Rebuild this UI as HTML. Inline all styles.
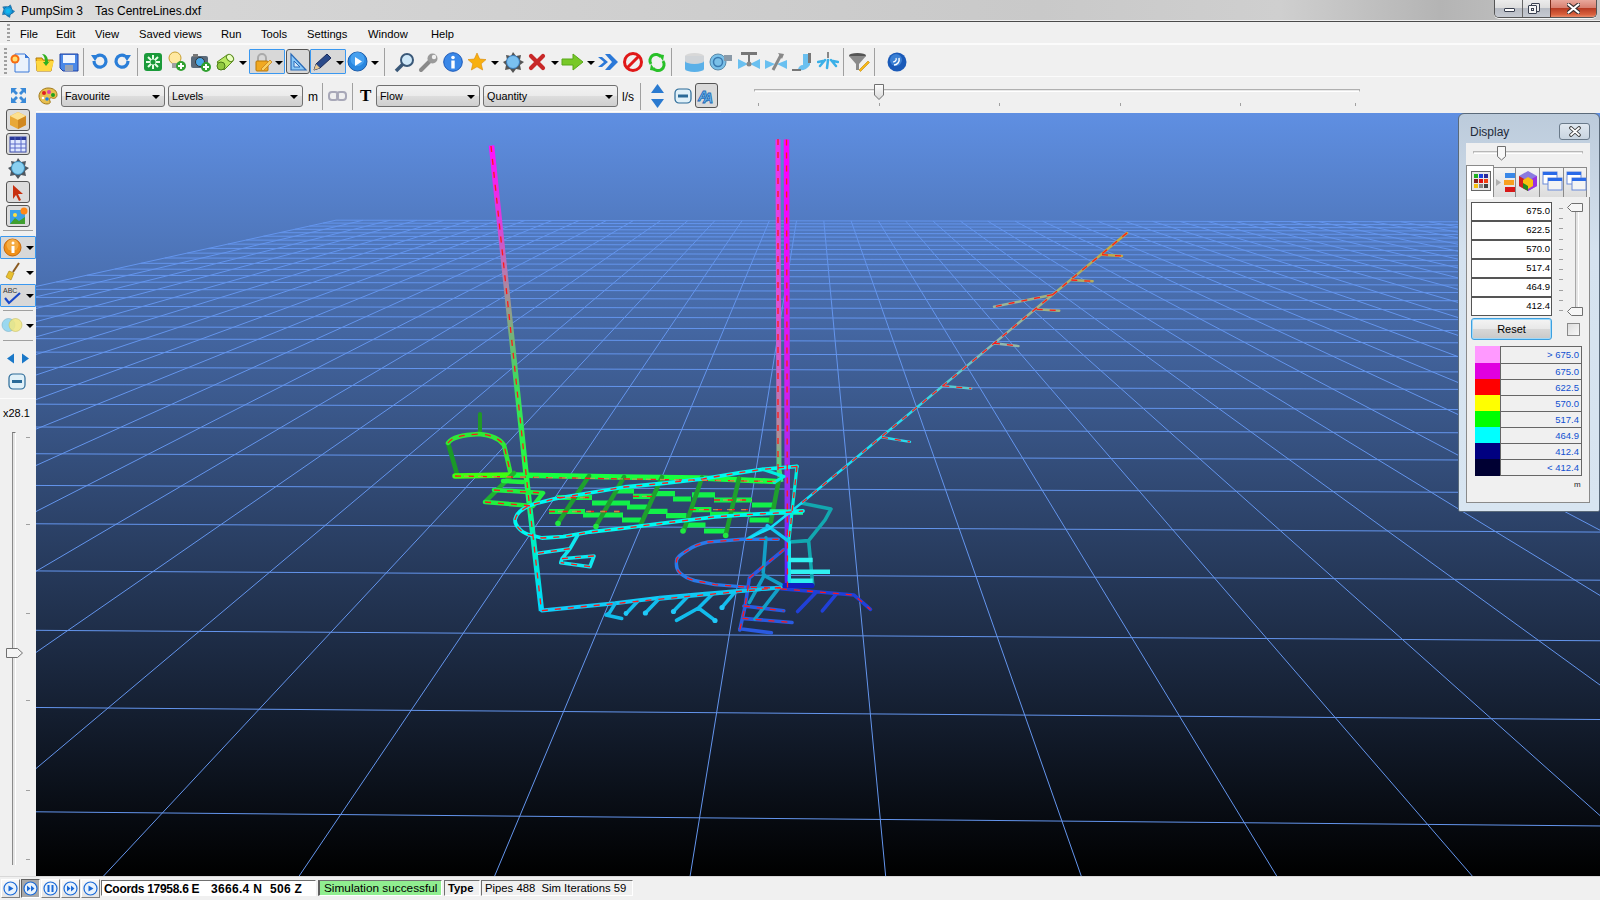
<!DOCTYPE html>
<html><head><meta charset="utf-8"><title>PumpSim 3</title>
<style>
*{box-sizing:border-box;margin:0;padding:0}
html,body{width:1600px;height:900px;overflow:hidden;background:#f0f0f0;font-family:"Liberation Sans",sans-serif;font-size:12px;color:#000;position:relative}
.a{position:absolute}
#view{position:absolute;left:0;top:0;z-index:1}
#title{position:absolute;left:0;top:0;width:1600px;height:22px;background:linear-gradient(90deg,#e2e2e2 0%,#d6d6d6 10%,#cfcfcf 40%,#c9c9c9 65%,#cfcfcf 80%,#b4b4b4 90%,#c8c8c8 100%);border-bottom:1px solid #4a4a4a;z-index:2}
#title:after{content:"";position:absolute;left:0;right:0;bottom:0;height:1px;background:#eee}
#title .t{position:absolute;top:4px;font-size:12px;color:#000}
#menu{position:absolute;left:0;top:22px;width:1600px;height:23px;background:#f0f0f0;z-index:2}
#menu span{position:absolute;top:6px;font-size:11.2px}
.grip{position:absolute;width:3px;background:repeating-linear-gradient(180deg,#a0a0a0 0 2px,transparent 2px 4px)}
.tb{position:absolute;left:0;width:1600px;background:#f0f0f0;z-index:2}
.sep{position:absolute;width:1px;background:#a0a0a0}
.ic{position:absolute}
.combo{position:absolute;height:22px;border:1px solid #707070;border-radius:3px;background:linear-gradient(#f2f2f2,#ebebeb 50%,#dddddd 50%,#cfcfcf);font-size:10.8px;padding:4px 0 0 3px}
.combo:after{content:"";position:absolute;right:4px;top:9px;border-left:4px solid transparent;border-right:4px solid transparent;border-top:4px solid #000}
.pressed{position:absolute;border:1px solid #3a98f0;background:#d8d8d8;border-radius:1px}
.pressed2{position:absolute;border:1px solid #555;background:#d8d8d8;border-radius:3px}
.dd{position:absolute;width:0;height:0;border-left:4px solid transparent;border-right:4px solid transparent;border-top:4px solid #000}
#left{position:absolute;left:0;top:111px;width:36px;height:765px;background:#f0f0f0;z-index:2}
#status{position:absolute;left:0;top:876px;width:1600px;height:24px;background:#f0f0f0;z-index:2}
.sb{position:absolute;top:4px;height:16px;border:1px solid #fff;border-top-color:#707070;border-left-color:#707070;font-size:11.3px;padding:1px 0 0 3px;white-space:nowrap;line-height:13px}
#panel{position:absolute;left:1458px;top:113px;width:142px;height:399px;border:1px solid #5a6a7a;border-radius:6px 6px 2px 2px;background:linear-gradient(#bccbdb,#d5e2ef 35%,#d8e5f1);z-index:3}
.fld{position:absolute;left:12px;width:81px;height:19px;border:1px solid #555;background:#fff;text-align:right;font-size:9.5px;padding:2px 1px 0 0}
.lg{position:absolute;left:16px;width:107px;height:17px}
.lg b{position:absolute;left:0;top:0;width:25px;height:17px}
.lg i{position:absolute;left:25px;top:0;width:82px;height:17px;border:1px solid #666;background:#f0f0f0;font-style:normal;text-align:right;color:#1050d0;font-size:9.5px;padding:2px 2px 0 0}
</style></head><body>
<div id="title">
<svg class="a" style="left:1px;top:4px" width="14" height="14" viewBox="0 0 16 16"><path d="M8.0 3.5L10.6 0.9Q12.7 4.0 12.1 6.1zM12.3 6.6L15.6 8.3Q13.3 11.3 11.1 11.3zM10.6 11.6L10.1 15.3Q6.5 14.0 5.8 11.9zM5.4 11.6L1.7 12.2Q1.8 8.4 3.6 7.1zM3.7 6.6L2.0 3.3Q5.7 2.3 7.5 3.5z" fill="#1a90d0" stroke="#0a4a80" stroke-width=".5"/><circle cx="8" cy="8" r="5" fill="#18a0e0" stroke="#0a5a90" stroke-width=".6"/><circle cx="8" cy="8" r="2.5" fill="#10b8f0"/></svg>
<span class="t" style="left:21px">PumpSim 3</span>
<span class="t" style="left:95px">Tas CentreLines.dxf</span>
<div class="a" style="left:1494px;top:0;width:103px;height:18px;border:1px solid #555;border-top:none;border-radius:0 0 5px 5px;overflow:hidden;box-shadow:0 1px 0 #f4f4f4">
 <div class="a" style="left:0;top:0;width:28px;height:17px;background:linear-gradient(#ececec,#dedede 45%,#b8bcc4 50%,#c6cad2);border-right:1px solid #666"></div>
 <div class="a" style="left:28px;top:0;width:27px;height:17px;background:linear-gradient(#ececec,#dedede 45%,#b8bcc4 50%,#c6cad2)"></div>
 <div class="a" style="left:55px;top:0;width:48px;height:17px;background:linear-gradient(#e8a89c,#d88070 45%,#b83c24 50%,#d8603c 85%,#e88a6a);border-left:1px solid #7a2a1a"></div>
 <div class="a" style="left:9px;top:8px;width:11px;height:4px;background:#fff;border:1px solid #3a4050;border-radius:1px"></div>
 <div class="a" style="left:36px;top:3px;width:9px;height:9px;border:1px solid #3a4050;background:#eee;border-radius:1px"></div>
 <div class="a" style="left:33px;top:5px;width:9px;height:9px;border:1px solid #3a4050;background:#f4f4f4;border-radius:1px"></div>
 <div class="a" style="left:36px;top:8px;width:3px;height:3px;border:1px solid #3a4050"></div>
 <svg class="a" style="left:72px;top:3px" width="13" height="11" viewBox="0 0 13 11"><path d="M1.5 1.5L11.5 9.5M11.5 1.5L1.5 9.5" stroke="#3a3030" stroke-width="4.2" stroke-linecap="round"/><path d="M1.5 1.5L11.5 9.5M11.5 1.5L1.5 9.5" stroke="#fff" stroke-width="2.2" stroke-linecap="round"/></svg>
</div>
</div>
<div id="menu">
<div class="grip" style="left:7px;top:2px;height:17px"></div>
<span style="left:20px">File</span><span style="left:56px">Edit</span><span style="left:95px">View</span><span style="left:139px">Saved views</span><span style="left:221px">Run</span><span style="left:261px">Tools</span><span style="left:307px">Settings</span><span style="left:368px">Window</span><span style="left:431px">Help</span>
<div class="a" style="left:0;top:21px;width:1600px;height:2px;background:#fbfbfb"></div>
</div>
<div class="tb" style="top:45px;height:32px">
<div class="grip" style="left:4px;top:3px;height:27px"></div>
<!-- new -->
<svg class="ic" style="left:10px;top:52px;top:7px" width="21" height="21" viewBox="0 0 21 21"><path d="M5 2h10l4 4v14H5z" fill="#eaf2fc" stroke="#3a78d8"/><path d="M15 2v4h4" fill="#3a78d8"/><circle cx="5" cy="7" r="4.5" fill="#f86c10"/><circle cx="5" cy="7" r="2.5" fill="#ffe070"/></svg>
<svg class="ic" style="left:35px;top:7px" width="21" height="21" viewBox="0 0 21 21"><path d="M1 6h6l1 2h10l-2 11H2z" fill="#f8c020" stroke="#b07808"/><path d="M1 9h18l-3 10H2z" fill="#ffd840"/><path d="M7 2c4 0 6 3 6 8l2-1-4 5-3-4 2 0c0-4-1-6-3-8z" fill="#30b020"/></svg>
<svg class="ic" style="left:59px;top:7px" width="21" height="21" viewBox="0 0 21 21"><path d="M1 2h18v17H4L1 16z" fill="#4a88e8" stroke="#2040a0"/><rect x="4" y="3" width="12" height="8" fill="#f0f6ff"/><rect x="6" y="13" width="8" height="6" fill="#9aa4b4"/></svg>
<div class="sep" style="left:83px;top:3px;height:28px"></div>
<svg class="ic" style="left:89px;top:7px" width="20" height="20" viewBox="0 0 20 20"><path d="M5 9a6 6 0 1 0 3-5" stroke="#2a7ed8" stroke-width="3.2" fill="none"/><path d="M2 3h8l-4 6z" fill="#2a7ed8"/></svg>
<svg class="ic" style="left:113px;top:7px" width="20" height="20" viewBox="0 0 20 20"><path d="M15 9a6 6 0 1 1-3-5" stroke="#2a7ed8" stroke-width="3.2" fill="none"/><path d="M18 3h-8l4 6z" fill="#2a7ed8"/></svg>
<div class="sep" style="left:137px;top:3px;height:28px"></div>
<svg class="ic" style="left:143px;top:7px" width="20" height="20" viewBox="0 0 20 20"><rect x="1" y="1" width="18" height="18" rx="3" fill="#1a9a3a"/><path d="M10 3v14M3 10h14M5 5l10 10M15 5L5 15" stroke="#e8ffe8" stroke-width="2"/><circle cx="10" cy="10" r="2.5" fill="#1a9a3a"/></svg>
<svg class="ic" style="left:167px;top:6px" width="20" height="21" viewBox="0 0 20 21"><circle cx="8" cy="7" r="6" fill="#ffe8a0" stroke="#c8a030"/><rect x="5" y="12" width="6" height="5" fill="#a0a0a0"/><circle cx="14" cy="15" r="5" fill="#30a030"/><path d="M14 12v6M11 15h6" stroke="#fff" stroke-width="2"/></svg>
<svg class="ic" style="left:190px;top:7px" width="22" height="20" viewBox="0 0 22 20"><rect x="1" y="4" width="17" height="12" rx="2" fill="#5a6a7a"/><circle cx="10" cy="10" r="4.5" fill="#4aa8e8" stroke="#333"/><rect x="3" y="2" width="5" height="3" fill="#777"/><circle cx="16" cy="15" r="5" fill="#30a030"/><path d="M16 12v6M13 15h6" stroke="#fff" stroke-width="2"/></svg>
<svg class="ic" style="left:214px;top:8px" width="22" height="19" viewBox="0 0 22 19"><path d="M3 9l10-7 6 6-9 9z" fill="#b8e860" stroke="#5a8a20"/><ellipse cx="16" cy="5" rx="4" ry="3" transform="rotate(45 16 5)" fill="#e8ffc0" stroke="#5a8a20"/><circle cx="7" cy="13" r="4" fill="#90c840" stroke="#4a7a18"/></svg>
<div class="dd" style="left:239px;top:16px"></div>
<div class="pressed" style="left:249px;top:4px;width:36px;height:25px"></div>
<svg class="ic" style="left:253px;top:7px" width="20" height="20" viewBox="0 0 20 20"><path d="M5 9V6a4 4 0 0 1 8 0v3" stroke="#aaa" stroke-width="2" fill="none"/><rect x="3" y="9" width="12" height="10" rx="1" fill="#f0a820" stroke="#b87808"/><path d="M8 17l9-9 2 2-9 9z" fill="#f8d060" stroke="#c88020" stroke-width=".8"/></svg>
<div class="dd" style="left:275px;top:16px"></div>
<div class="pressed2" style="left:286px;top:4px;width:24px;height:25px"></div>
<svg class="ic" style="left:288px;top:7px" width="20" height="20" viewBox="0 0 20 20"><path d="M3 2v16h15z" fill="#8ac8f8" stroke="#2a6ab8" stroke-width="1.2"/><path d="M6 9v6h6z" fill="#d8e8f8" stroke="#2a6ab8"/></svg>
<div class="pressed" style="left:310px;top:4px;width:36px;height:25px"></div>
<svg class="ic" style="left:312px;top:7px" width="20" height="20" viewBox="0 0 20 20"><path d="M2 18l2-6 11-10 4 4L8 16z" fill="#2a4a8a" stroke="#1a2a5a"/><path d="M2 18l2-6 4 4z" fill="#e8c890"/></svg>
<div class="dd" style="left:336px;top:16px"></div>
<svg class="ic" style="left:347px;top:6px" width="21" height="21" viewBox="0 0 21 21"><circle cx="10.5" cy="10.5" r="9.5" fill="#2a88e0" stroke="#1a5aa8"/><circle cx="10.5" cy="8" r="7" fill="#5ab0f8" opacity=".6"/><path d="M8 6l7 4.5-7 4.5z" fill="#fff"/></svg>
<div class="dd" style="left:371px;top:16px"></div>
<div class="sep" style="left:384px;top:3px;height:28px"></div>
<svg class="ic" style="left:394px;top:7px" width="22" height="21" viewBox="0 0 22 21"><circle cx="13" cy="8" r="6" fill="#cfe8f8" stroke="#3a5878" stroke-width="2"/><path d="M9 12l-7 7" stroke="#3a5878" stroke-width="3.5"/></svg>
<svg class="ic" style="left:418px;top:7px" width="21" height="21" viewBox="0 0 21 21"><path d="M3 18l9-9" stroke="#8a8a8a" stroke-width="4" stroke-linecap="round"/><circle cx="14.5" cy="6.5" r="5" fill="#9a9a9a"/><circle cx="16" cy="5" r="2.2" fill="#f0f0f0"/></svg>
<svg class="ic" style="left:443px;top:7px" width="20" height="20" viewBox="0 0 20 20"><circle cx="10" cy="10" r="9.3" fill="#3a88e8" stroke="#1a58b8"/><circle cx="10" cy="5.5" r="1.8" fill="#fff"/><rect x="8.3" y="8.5" width="3.4" height="8" fill="#fff"/></svg>
<svg class="ic" style="left:467px;top:7px" width="20" height="20" viewBox="0 0 20 20"><path d="M10 1l2.7 6 6.3.6-4.8 4.2 1.5 6.2L10 14.8 4.3 18l1.5-6.2L1 7.6 7.3 7z" fill="#f8b010" stroke="#d88808" stroke-width=".6"/></svg>
<div class="dd" style="left:491px;top:16px"></div>
<svg class="ic" style="left:502px;top:6px" width="22" height="22" viewBox="0 0 22 22"><path d="M11 1l3 4 5-1-1 5 4 2-4 3 1 5-5-1-3 4-3-4-5 1 1-5-3-3 4-2-1-5 5 1z" fill="#555"/><circle cx="11" cy="11" r="6.5" fill="#7ac0f0" stroke="#3a7ab8"/></svg>
<svg class="ic" style="left:528px;top:8px" width="18" height="18" viewBox="0 0 18 18"><path d="M3 3l12 12M15 3L3 15" stroke="#c82828" stroke-width="4.2" stroke-linecap="round"/></svg>
<div class="dd" style="left:551px;top:16px"></div>
<svg class="ic" style="left:561px;top:7px" width="23" height="20" viewBox="0 0 23 20"><path d="M1 7h11V2l10 8-10 8v-5H1z" fill="#78c828" stroke="#58a818"/></svg>
<div class="dd" style="left:587px;top:16px"></div>
<svg class="ic" style="left:597px;top:7px" width="23" height="20" viewBox="0 0 23 20"><path d="M1 5h4l6 5-6 5H1l6-5z" fill="#2a78d8"/><path d="M8 2h5l8 8-8 8H8l7-8z" fill="#2a78d8"/></svg>
<svg class="ic" style="left:622px;top:6px" width="22" height="22" viewBox="0 0 22 22"><circle cx="11" cy="11" r="8.5" fill="none" stroke="#e01818" stroke-width="3"/><path d="M5 17L17 5" stroke="#e01818" stroke-width="3"/></svg>
<svg class="ic" style="left:647px;top:7px" width="20" height="21" viewBox="0 0 20 21"><path d="M4 12a6 6 0 0 1 10-7" stroke="#28c028" stroke-width="3" fill="none"/><path d="M16 9a6 6 0 0 1-10 7" stroke="#28c028" stroke-width="3" fill="none"/><path d="M11 2l6 1-1 6z" fill="#28c028"/><path d="M9 19l-6-1 1-6z" fill="#28c028"/></svg>
<div class="sep" style="left:671px;top:3px;height:28px"></div>
<svg class="ic" style="left:684px;top:7px" width="21" height="20" viewBox="0 0 21 20"><ellipse cx="10.5" cy="4" rx="9.5" ry="3" fill="#d8d8d8"/><path d="M1 4v13a9.5 3 0 0 0 19 0V4" fill="#5ab0e8"/><path d="M1 4v5a9.5 3 0 0 0 19 0V4" fill="#d0d4d8"/></svg>
<svg class="ic" style="left:709px;top:8px" width="24" height="18" viewBox="0 0 24 18"><circle cx="9" cy="9" r="8" fill="#7ac0e8" stroke="#5a8aa8"/><circle cx="9" cy="9" r="4.5" fill="none" stroke="#3a7ab0" stroke-width="1.5"/><rect x="15" y="2" width="8" height="6" fill="#8a9aa8"/></svg>
<svg class="ic" style="left:737px;top:6px" width="24" height="21" viewBox="0 0 24 21"><path d="M1 8l10 5-10 5zM23 8l-10 5 10 5z" fill="#6ac0f0"/><rect x="4" y="1" width="16" height="3" fill="#777"/><rect x="11" y="3" width="2" height="9" fill="#777"/><circle cx="12" cy="13" r="2.5" fill="#888"/></svg>
<svg class="ic" style="left:764px;top:6px" width="24" height="21" viewBox="0 0 24 21"><path d="M1 9l10 4-10 5zM23 9l-10 4 10 5z" fill="#6ac0f0"/><path d="M9 19l8-15" stroke="#888" stroke-width="3"/><path d="M14 2l6 1-2 5z" fill="#888"/></svg>
<svg class="ic" style="left:791px;top:7px" width="22" height="20" viewBox="0 0 22 20"><path d="M2 18h5a5 5 0 0 1 5-5V2h7v11a12 12 0 0 1-12 5z" fill="#6ac0f0"/><rect x="17" y="1" width="3" height="10" fill="#777"/><rect x="1" y="17" width="9" height="2" fill="#777"/></svg>
<svg class="ic" style="left:817px;top:6px" width="22" height="21" viewBox="0 0 22 21"><rect x="10" y="1" width="2" height="6" fill="#888"/><path d="M11 9l-1 8M8 9l-5 6M14 9l5 6M6 10l-5 1M16 10l5 1M11 9v0" stroke="#3ab0e8" stroke-width="2.5" stroke-linecap="round"/></svg>
<div class="sep" style="left:843px;top:3px;height:28px"></div>
<svg class="ic" style="left:848px;top:7px" width="22" height="20" viewBox="0 0 22 20"><ellipse cx="9.5" cy="3.5" rx="8.5" ry="2.5" fill="#555"/><path d="M1 4l7 8v6h3v-6l7-8" fill="#8a8a8a"/><path d="M11 18l9-9 1.5 1.5-9 9z" fill="#f8b818" stroke="#c08808" stroke-width=".6"/></svg>
<div class="sep" style="left:874px;top:3px;height:28px"></div>
<svg class="ic" style="left:886px;top:6px" width="22" height="22" viewBox="0 0 22 22"><circle cx="11" cy="11" r="9.5" fill="#1a5ab8"/><circle cx="10" cy="9" r="6" fill="#4a90e0" opacity=".7"/><path d="M8 14c3 0 6-3 5-7" stroke="#fff" stroke-width="1.5" fill="none"/><path d="M7 11c2 0 4-2 3-4" stroke="#fff" stroke-width="1.2" fill="none"/></svg>
<div class="a" style="left:0;top:31px;width:1600px;height:1px;background:#fbfbfb"></div>
</div>
<div class="tb" style="top:77px;height:34px">
<svg class="ic" style="left:10px;top:10px" width="17" height="17" viewBox="0 0 17 17"><path d="M1 1h6L5 3l3 3-2 2-3-3-2 2zM16 1v6l-2-2-3 3-2-2 3-3-2-2zM1 16v-6l2 2 3-3 2 2-3 3 2 2zM16 16h-6l2-2-3-3 2-2 3 3 2-2z" fill="#3a8ad8"/></svg>
<svg class="ic" style="left:38px;top:10px" width="20" height="18" viewBox="0 0 20 18"><path d="M10 1c6 0 9 3 9 7 0 3-3 4-5 3-2-1-3 1-2 3 1 2-1 3-3 3C4 17 1 13 1 9s4-8 9-8z" fill="#e8c050" stroke="#a07818"/><circle cx="6" cy="6" r="2" fill="#e02020"/><circle cx="11" cy="5" r="2" fill="#e040a0"/><circle cx="15" cy="8" r="2" fill="#20a020"/><circle cx="9" cy="12" r="1.8" fill="#2080e0"/><circle cx="5" cy="11" r="1.3" fill="#fff"/></svg>
<div class="combo" style="left:61px;top:8px;width:104px">Favourite</div>
<div class="combo" style="left:168px;top:8px;width:135px">Levels</div>
<span class="a" style="left:308px;top:13px;font-size:12px">m</span>
<div class="sep" style="left:322px;top:6px;height:27px"></div>
<svg class="ic" style="left:328px;top:13px" width="19" height="12" viewBox="0 0 19 12"><rect x="1" y="2" width="9" height="8" rx="3" fill="none" stroke="#a8a8b8" stroke-width="2"/><rect x="9" y="2" width="9" height="8" rx="3" fill="none" stroke="#a8a8b8" stroke-width="2"/></svg>
<div class="sep" style="left:352px;top:6px;height:27px"></div>
<span class="a" style="left:360px;top:9px;font-family:'Liberation Serif',serif;font-weight:bold;font-size:17px">T</span>
<div class="combo" style="left:376px;top:8px;width:104px">Flow</div>
<div class="combo" style="left:483px;top:8px;width:135px">Quantity</div>
<span class="a" style="left:622px;top:13px;font-size:12px">l/s</span>
<div class="sep" style="left:640px;top:6px;height:27px"></div>
<svg class="ic" style="left:650px;top:6px" width="15" height="26" viewBox="0 0 15 26"><path d="M7.5 1L14 10H1z" fill="#2a7ad0"/><path d="M7.5 25L14 16H1z" fill="#2a7ad0"/></svg>
<svg class="ic" style="left:674px;top:11px" width="18" height="16" viewBox="0 0 18 16"><rect x="1" y="1" width="16" height="14" rx="4" fill="#e0f0f8" stroke="#2a6a98" stroke-width="1.2"/><rect x="4" y="6.5" width="10" height="3" fill="#2a6a98"/></svg>
<div class="pressed2" style="left:695px;top:6px;width:23px;height:25px;background:#dadada"></div>
<svg class="ic" style="left:697px;top:9px" width="19" height="19" viewBox="0 0 19 19"><g font-family="Liberation Sans" font-style="italic" font-weight="bold" font-size="14" fill="#7cc4f4" stroke="#1a6ab8" stroke-width=".9"><text x="1" y="15">A</text><text x="6" y="17">A</text></g></svg>
<div class="a" style="left:754px;top:12px;width:606px;height:3px;border:1px solid #b0b0b0;border-bottom-color:#fff;background:#e8e8e8"></div>
<svg class="ic" style="left:873px;top:6px" width="12" height="19" viewBox="0 0 12 19"><path d="M1.5 1.5h9v10.5l-4.5 4.5-4.5-4.5z" fill="url(#thg)" stroke="#707070"/><defs><linearGradient id="thg" x1="0" y1="0" x2="0" y2="1"><stop offset="0" stop-color="#fdfdfd"/><stop offset="1" stop-color="#d8d8d8"/></linearGradient></defs></svg>
<div class="a" style="left:36px;top:34px;width:685px;height:1px;background:#fdfdfd"></div>
<div class="a" style="left:758px;top:26px;width:1px;height:3px;background:#a0a0a0"></div>
<div class="a" style="left:879px;top:26px;width:1px;height:3px;background:#a0a0a0"></div>
<div class="a" style="left:999px;top:26px;width:1px;height:3px;background:#a0a0a0"></div>
<div class="a" style="left:1120px;top:26px;width:1px;height:3px;background:#a0a0a0"></div>
<div class="a" style="left:1240px;top:26px;width:1px;height:3px;background:#a0a0a0"></div>
<div class="a" style="left:1355px;top:26px;width:1px;height:3px;background:#a0a0a0"></div>
</div>
<div id="left">
<div class="pressed2" style="left:6px;top:-2px;width:24px;height:22px;background:#dcdcdc"></div>
<svg class="ic" style="left:9px;top:0px" width="18" height="19" viewBox="0 0 18 19"><path d="M9 1l8 4v9l-8 4-8-4V5z" fill="#e8a838"/><path d="M9 1l8 4-8 4-8-4z" fill="#fce090"/><path d="M9 9v9l8-4V5z" fill="#d08820"/></svg>
<div class="pressed2" style="left:6px;top:22px;width:24px;height:22px;background:#dcdcdc"></div>
<svg class="ic" style="left:9px;top:25px" width="18" height="17" viewBox="0 0 18 17"><rect x="1" y="1" width="16" height="15" fill="#dfe8ff" stroke="#3a4aa8"/><rect x="1" y="1" width="16" height="3" fill="#2a3a98"/><path d="M1 8h16M1 12h16M6 1v15M12 1v15" stroke="#5a6ac8"/></svg>
<svg class="ic" style="left:7px;top:46px" width="22" height="22" viewBox="0 0 22 22"><path d="M11 1l3 4 5-1-1 5 4 2-4 3 1 5-5-1-3 4-3-4-5 1 1-5-3-3 4-2-1-5 5 1z" fill="#505860"/><circle cx="11" cy="11" r="6.5" fill="#8ad0f0" stroke="#3a8ab8"/></svg>
<div class="pressed2" style="left:6px;top:70px;width:24px;height:22px;background:#dcdcdc"></div>
<svg class="ic" style="left:11px;top:73px" width="14" height="17" viewBox="0 0 14 17"><path d="M2 1l10 9-5 0 3 6-2 1-3-6-3 4z" fill="#c83010"/></svg>
<div class="pressed2" style="left:6px;top:94px;width:24px;height:22px;background:#dcdcdc"></div>
<svg class="ic" style="left:9px;top:96px" width="19" height="18" viewBox="0 0 19 18"><rect x="1" y="3" width="15" height="14" fill="#3aa0e8"/><path d="M1 17l5-6 4 3 6-4v7z" fill="#40a030"/><circle cx="6" cy="8" r="2" fill="#ffe040"/><circle cx="15" cy="4" r="3.5" fill="#ff8818"/></svg>
<div class="sep" style="left:3px;top:119px;width:30px;height:1px"></div>
<div class="pressed" style="left:0px;top:125px;width:36px;height:23px"></div>
<svg class="ic" style="left:3px;top:127px" width="19" height="19" viewBox="0 0 19 19"><circle cx="9.5" cy="9.5" r="8.5" fill="#f09018" stroke="#c86808"/><circle cx="9.5" cy="7" r="6" fill="#f8c060" opacity=".6"/><circle cx="10" cy="5" r="1.5" fill="#fff"/><rect x="8.5" y="8" width="3" height="7" fill="#fff"/></svg>
<div class="dd" style="left:26px;top:135px"></div>
<svg class="ic" style="left:5px;top:151px" width="16" height="19" viewBox="0 0 16 19"><path d="M14 1l-6 9" stroke="#8a5a20" stroke-width="2"/><path d="M4 9l5 2-3 7-5-3z" fill="#e8c030" stroke="#a88010" stroke-width=".6"/></svg>
<div class="dd" style="left:26px;top:160px"></div>
<div class="pressed" style="left:0px;top:173px;width:36px;height:23px"></div>
<svg class="ic" style="left:2px;top:175px" width="21" height="19" viewBox="0 0 21 19"><text x="1" y="7" font-family="Liberation Sans" font-size="7" fill="#333">ABC</text><path d="M3 12l4 5 11-10" stroke="#1a48c8" stroke-width="2.2" fill="none"/></svg>
<div class="dd" style="left:26px;top:183px"></div>
<div class="sep" style="left:3px;top:199px;width:30px;height:1px"></div>
<svg class="ic" style="left:1px;top:206px" width="22" height="16" viewBox="0 0 22 16"><circle cx="7.5" cy="8" r="6.5" fill="#9ad8f0" stroke="#7ab0c8" stroke-width=".6"/><circle cx="14.5" cy="8" r="6.5" fill="#f0e880" fill-opacity=".85" stroke="#c8c060" stroke-width=".6"/></svg>
<div class="dd" style="left:26px;top:213px"></div>
<div class="sep" style="left:3px;top:229px;width:30px;height:1px"></div>
<svg class="ic" style="left:6px;top:242px" width="24" height="11" viewBox="0 0 24 11"><path d="M1 5.5L8 0.5v10zM23 5.5L16 0.5v10z" fill="#1a78c8"/></svg>
<svg class="ic" style="left:8px;top:262px" width="18" height="17" viewBox="0 0 18 17"><rect x="1" y="1" width="16" height="15" rx="4" fill="#e0f0f8" stroke="#2a6a98" stroke-width="1.2"/><rect x="4" y="7" width="10" height="3" fill="#2a6a98"/></svg>
<div class="a" style="left:0;top:287px;width:36px;height:1px;background:#fbfbfb"></div>
<span class="a" style="left:3px;top:296px;font-size:11px">x28.1</span>
<div class="a" style="left:12px;top:321px;width:4px;height:433px;border-left:1px solid #8a8a8a;border-right:1px solid #fff;background:#e4e4e4;border-top:1px solid #777"></div>
<div class="a" style="left:26px;top:326px;width:4px;height:1px;background:#a0a0a0"></div>
<div class="a" style="left:26px;top:413px;width:4px;height:1px;background:#a0a0a0"></div>
<div class="a" style="left:26px;top:502px;width:4px;height:1px;background:#a0a0a0"></div>
<div class="a" style="left:26px;top:589px;width:4px;height:1px;background:#a0a0a0"></div>
<div class="a" style="left:26px;top:679px;width:4px;height:1px;background:#a0a0a0"></div>
<div class="a" style="left:26px;top:748px;width:4px;height:1px;background:#a0a0a0"></div>
<svg class="ic" style="left:5px;top:536px" width="19" height="12" viewBox="0 0 19 12"><path d="M1.5 1.5h11l5 4.5-5 4.5h-11z" fill="#f4f4f4" stroke="#707070"/></svg>
</div>
<svg id="view" width="1600" height="900" viewBox="0 0 1600 900"><defs><linearGradient id="bg" x1="0" y1="113" x2="0" y2="876" gradientUnits="userSpaceOnUse"><stop offset="0" stop-color="#5f8fe2"/><stop offset="1" stop-color="#000"/></linearGradient><clipPath id="vc"><rect x="36" y="113" width="1564" height="763"/></clipPath></defs><g clip-path="url(#vc)"><rect x="36" y="113" width="1564" height="763" fill="url(#bg)"/><path d="M-3813.0 1136.6L336.0 220.2M-3565.4 1140.0L362.9 220.3M-3316.2 1143.5L389.9 220.3M-3065.2 1147.0L416.9 220.3M-2812.5 1150.6L443.8 220.4M-2558.1 1154.1L470.9 220.4M-2301.9 1157.7L497.9 220.4M-2043.9 1161.3L524.9 220.5M-1784.2 1165.0L552.0 220.5M-1522.6 1168.6L579.1 220.5M-1259.2 1172.3L606.2 220.6M-993.9 1176.0L633.3 220.6M-726.8 1179.8L660.5 220.7M-457.7 1183.6L687.7 220.7M-186.8 1187.3L714.8 220.7M86.1 1191.2L742.0 220.8M360.9 1195.0L769.3 220.8M637.7 1198.9L796.5 220.8M916.5 1202.8L823.8 220.9M1197.4 1206.7L851.1 220.9M1480.2 1210.7L878.4 220.9M1765.2 1214.7L905.7 221.0M2052.2 1218.7L933.0 221.0M2341.3 1222.7L960.4 221.1M2632.6 1226.8L987.7 221.1M2926.0 1230.9L1015.1 221.1M3221.6 1235.1L1042.6 221.2M3519.3 1239.2L1070.0 221.2M3819.4 1243.4L1097.4 221.2M4121.6 1247.7L1124.9 221.3M4426.2 1251.9L1152.4 221.3M4733.1 1256.2L1179.9 221.4M5042.2 1260.6L1207.5 221.4M5353.8 1264.9L1235.0 221.4M5667.7 1269.3L1262.6 221.5M5984.1 1273.8L1290.2 221.5M6302.9 1278.2L1317.8 221.5M6624.1 1282.7L1345.4 221.6M6947.9 1287.2L1373.1 221.6M7274.2 1291.8L1400.7 221.7M7603.0 1296.4L1428.4 221.7M7934.4 1301.1L1456.1 221.7M8268.5 1305.7L1483.8 221.8M8605.2 1310.5L1511.6 221.8M8944.5 1315.2L1539.4 221.8M9286.6 1320.0L1567.2 221.9M9631.5 1324.8L1595.0 221.9M9979.1 1329.7L1622.8 222.0M10329.5 1334.6L1650.6 222.0M10682.7 1339.5L1678.5 222.0M11038.9 1344.5L1706.4 222.1M-3813.0 1136.6L11038.9 1344.5M-2871.7 928.7L8634.1 1055.3M-2248.6 791.1L7145.1 876.2M-1805.8 693.3L6132.4 754.4M-1474.8 620.2L5399.0 666.2M-1218.1 563.5L4843.4 599.4M-1013.2 518.2L4407.8 547.0M-845.8 481.2L4057.3 504.8M-706.5 450.5L3769.0 470.1M-588.8 424.5L3527.8 441.1M-488.0 402.2L3323.0 416.5M-400.7 382.9L3146.9 395.3M-324.4 366.1L2994.0 376.9M-257.1 351.2L2859.8 360.8M-197.4 338.0L2741.2 346.5M-143.9 326.2L2635.6 333.8M-95.8 315.6L2541.0 322.4M-52.3 306.0L2455.7 312.2M-12.8 297.3L2378.4 302.9M23.2 289.3L2308.1 294.4M56.3 282.0L2243.8 286.7M86.7 275.3L2184.9 279.6M114.8 269.1L2130.6 273.1M140.7 263.3L2080.4 267.0M164.8 258.0L2033.9 261.5M187.3 253.1L1990.7 256.3M208.2 248.4L1950.5 251.4M227.8 244.1L1912.9 246.9M246.2 240.1L1877.8 242.7M263.4 236.2L1844.8 238.7M279.6 232.7L1813.8 235.0M294.9 229.3L1784.6 231.5M309.4 226.1L1757.0 228.2M323.0 223.1L1731.0 225.0M336.0 220.2L1706.4 222.1" stroke="#6495ed" stroke-width="1" fill="none"/><defs>
<linearGradient id="gs1" gradientUnits="userSpaceOnUse" x1="0" y1="146" x2="0" y2="611"><stop offset="0" stop-color="#ff10ff"/><stop offset=".15" stop-color="#e038e0"/><stop offset=".27" stop-color="#b878b0"/><stop offset=".36" stop-color="#90a088"/><stop offset=".5" stop-color="#40d860"/><stop offset=".72" stop-color="#20ff40"/><stop offset=".84" stop-color="#00f0c0"/><stop offset="1" stop-color="#00d8ff"/></linearGradient>
<linearGradient id="gs2" gradientUnits="userSpaceOnUse" x1="0" y1="139" x2="0" y2="590"><stop offset="0" stop-color="#f030f0"/><stop offset=".5" stop-color="#d060c8"/><stop offset=".66" stop-color="#b09098"/><stop offset=".74" stop-color="#40e070"/><stop offset=".86" stop-color="#10ffd0"/><stop offset="1" stop-color="#00ffff"/></linearGradient>
<linearGradient id="gs3" gradientUnits="userSpaceOnUse" x1="0" y1="139" x2="0" y2="590"><stop offset="0" stop-color="#ff00ff"/><stop offset=".55" stop-color="#d020f0"/><stop offset=".8" stop-color="#9030f0"/><stop offset="1" stop-color="#5020ff"/></linearGradient>
<linearGradient id="gd" gradientUnits="userSpaceOnUse" x1="802" y1="502" x2="1127" y2="233"><stop offset="0" stop-color="#10e0f8"/><stop offset=".35" stop-color="#30d8e8"/><stop offset=".6" stop-color="#90b8b0"/><stop offset=".8" stop-color="#a8b070"/><stop offset="1" stop-color="#c8a838"/></linearGradient>
</defs>
<g fill="none" stroke-linecap="round" stroke-linejoin="round">
<!-- shafts -->
<path d="M491.5 145.5L527 483L541.5 611" stroke="url(#gs1)" stroke-width="5.5" stroke-linecap="butt"/>
<path d="M778 139.5L779 470L781 482" stroke="url(#gs2)" stroke-width="5" stroke-linecap="butt"/>
<path d="M786.5 139.5L787.5 590" stroke="url(#gs3)" stroke-width="5.5" stroke-linecap="butt"/>
<!-- left loop -->
<path d="M480 414V433" stroke="#209828" stroke-width="4"/>
<path d="M457 474L448 443" stroke="#1a9a28" stroke-width="4.5"/>
<path d="M448 443C452 437 462 435 479 434C492 435 500 439 504 445L510 471" stroke="#30e838" stroke-width="4.5"/>
<path d="M455 476L513 475" stroke="#40ff10" stroke-width="5.5"/>
<path d="M513 475L620 477L700 478L776 481.5" stroke="#18ff40" stroke-width="5.5"/>
<!-- parallelogram -->
<path d="M514 473L486 501" stroke="#20b030" stroke-width="4.5"/>
<path d="M485 502L533 506L543 493L494 490M503 481L523 482" stroke="#20f040" stroke-width="4.5"/>
<!-- staircase -->
<g stroke="#12f04a" stroke-width="5.2" stroke-linecap="butt">
<path d="M557 497.5H592M592 503H630M614 491H634M633 496.4H654M653 493.6H675M673 499H691M692 494.8H715M714 500H752M752 505H773"/>
<path d="M549 511.5H585M583 515H623M622 520H641M627 507H647M646 511.4H667.5M666 515.6H686.5M690 509.7H711.4M710 514.4H750.6M749.5 520H769.6M684 525H705.5M704 531H727"/>
</g>
<!-- green diagonals -->
<g stroke="#1ea02e" stroke-width="4.5">
<path d="M558 523L589 476M596 526L624 477M641 524L662 477M684 530L702 477.6M725.7 535L739 478.2M771 521.5L779 479"/>
</g>
<g fill="#20e840"><circle cx="558" cy="523.5" r="2.8"/><circle cx="596" cy="526.5" r="2.8"/><circle cx="683" cy="531" r="2.8"/><circle cx="725.7" cy="535.5" r="2.8"/></g>
<path d="M769.6 512H803" stroke="#20f898" stroke-width="5.5" stroke-linecap="butt"/>
<!-- cyan loops -->
<path d="M797 466.3L762.5 469.3L738.8 472.8L703 478.8L661.6 483.5L624.8 487L555.3 498.7L534 504C525 507 517 512 515.3 518.7C514 524 520 532 528.7 534.7L542 538L563.3 536.7L590 532L620 528.6L667.5 522.7L715 516.8L750.6 514.4L774.4 513.2L803 511" stroke="#00f8f0" stroke-width="3.8"/>
<path d="M797 466.3L791 521.5L788.6 543M762.5 469.3L784 476.4L774.4 482.3" stroke="#00f0e0" stroke-width="3.2"/>
<!-- left vertical continuation & bottom line -->
<path d="M541.9 610.6L615 603.3L660 597.7L705 593.7L715 592.9L781 587.4" stroke="#12ccf8" stroke-width="4"/>
<g stroke="#12bcec" stroke-width="3.6">
<path d="M615 603.9L609.4 612.9L606 615.1L621.7 618.5M637.5 601.6L626.2 613.4M660 597.7L645.4 612.9M689.2 594.9L673.5 611.2M712.3 594.3L698.5 608L676.5 620.4M698.5 608L715 620.4M734.3 592.9L721.9 607.3"/>
</g>
<g fill="#20c8f8"><circle cx="645.4" cy="613" r="2.6"/><circle cx="673.5" cy="611.5" r="2.6"/><circle cx="715" cy="620.5" r="2.6"/><circle cx="722" cy="607.5" r="2.6"/><circle cx="626" cy="613.5" r="2.4"/></g>
<!-- small cyan ladder -->
<path d="M538 553.3L570 548.7L578 534.7M570 548.7L562 558.7L594 556L590 566.7L560.7 562.7L562 558.7" stroke="#10e8f0" stroke-width="3.6"/>
<!-- blue oval -->
<path d="M778.3 539.3L742.5 539.3L708.1 542C698 544 692 547 687.5 550.3C680 555 676 558 676.5 561.3C676 566 677 570 679.3 572.3C684 577 689 579 694.4 580.5L715 584.6L749.4 587.4L781 588.1" stroke="#2a7ae8" stroke-width="3.4"/>
<!-- right structure -->
<path d="M789.3 542L808.6 540.6L825 520L831 509L802.2 503.3M808.6 540.6L812.7 584.6" stroke="#12a8b0" stroke-width="3.6"/>
<path d="M789.3 542V588.8" stroke="#10e8f0" stroke-width="3.4"/>
<g stroke="#30f0f0" stroke-width="4.5" stroke-linecap="butt"><path d="M789 559.9H812.7M790.7 571.8H830M790.7 580.8H812.7"/></g>
<path d="M781 588.8L854 595L870.5 609.4M815.4 592.9L797.6 611.5M836 594.3L822.3 610.8" stroke="#2040d8" stroke-width="3.6"/>
<path d="M780 585.5H812" stroke="#1020c0" stroke-width="5"/>
<path d="M783.8 549.6L749.4 577.8L745.3 605.3L739.8 630M743.9 606L783.8 610.8M742.5 618.4L792 622.5M739.8 628.7L771.4 632.8" stroke="#2a5ae0" stroke-width="3.6"/>
<path d="M765.9 537.9L763.2 572.3M764.5 575L749.4 602.5M778.3 588.8L754.9 619M763.2 575L781 584.6" stroke="#12a0c8" stroke-width="3.6"/>
<path d="M766 528L749.4 537.9M767.3 525.5L787.9 540.6M660 599L781 587.4" stroke="#10c8f0" stroke-width="3.4"/>
<!-- long diagonal -->
<path d="M747 539L769 529L802.2 502.5L1127 233" stroke="url(#gd)" stroke-width="2.4"/>
<path d="M882 437.3L910 441.9M943.3 385.9L971.3 388.5M994 343.2L1018.5 346.1M1036.7 309.3L1059.3 310.7M1052.7 294.7L994 306.7M1071.3 280L1092.7 281.3M1102 254.7L1122 256" stroke="url(#gd)" stroke-width="2.4"/>
<!-- red centre dashes -->
<g stroke="#ff1818" stroke-width="1.3" stroke-dasharray="6 7" stroke-linecap="butt">
<path d="M491 146L527 483L541.5 611M778 139V470M786.5 139.5L787.5 590M455 476L776 481.5M541.9 610.6L781 587.4M802.2 502.5L1127 233M797 466.3L762.5 469.3L738.8 472.8L703 478.8L661.6 483.5L624.8 487L555.3 498.7L534 504C525 507 517 512 515.3 518.7C514 524 520 532 528.7 534.7L542 538L563.3 536.7L590 532L620 528.6L667.5 522.7L715 516.8L750.6 514.4L774.4 513.2L803 511M778.3 539.3L742.5 539.3L708.1 542C698 544 692 547 687.5 550.3C680 555 676 558 676.5 561.3C676 566 677 570 679.3 572.3C684 577 689 579 694.4 580.5L715 584.6L749.4 587.4L781 588.1M448 443C452 437 462 435 479 434C492 435 500 439 504 445L510 471M485 502L533 506M494 490L543 493M557 497.5H592M549 511.5H623M633 496.4H654M714 500H752M690 509.7H750M781 588.8L854 595L870.5 609.4M743.9 606L783.8 610.8M742.5 618.4L792 622.5M783.8 549.6L749.4 577.8L745.3 605.3L739.8 630M797 466.3L791 521.5L788.6 543M538 553.3L570 548.7M562 558.7L594 556M590 566.7L560.7 562.7M882 437.3L910 441.9M943.3 385.9L971.3 388.5M994 343.2L1018.5 346.1M1036.7 309.3L1059.3 310.7M1052.7 294.7L994 306.7M1071.3 280L1092.7 281.3M1102 254.7L1122 256"/>
</g>
<g stroke="#c8a050" stroke-width="1.3" stroke-dasharray="5 9" stroke-dashoffset="5" stroke-linecap="butt" opacity=".8">
<path d="M455 476L776 481.5M557 497.5H592M549 511.5H623M633 496.4H654M714 500H752M690 509.7H750"/>
</g>
</g>
</g></svg><div id="panel">
<span class="a" style="left:11px;top:11px;font-size:12px;color:#1e2a3a">Display</span>
<div class="a" style="left:100px;top:9px;width:31px;height:17px;border:1px solid #6a7a8a;border-radius:3px;background:linear-gradient(#e0e8f0,#c8d4e0)"></div>
<svg class="a" style="left:110px;top:12px" width="12" height="11" viewBox="0 0 12 11"><path d="M2 2l8 7M10 2L2 9" stroke="#333" stroke-width="3.6" stroke-linecap="round"/><path d="M2 2l8 7M10 2L2 9" stroke="#fff" stroke-width="1.8" stroke-linecap="round"/></svg>
<div class="a" style="left:7px;top:29px;width:124px;height:360px;background:#f0f0f0"></div>
<div class="a" style="left:14px;top:37px;width:110px;height:3px;border:1px solid #b8b8b8;border-bottom-color:#fff;background:#e6e6e6"></div>
<svg class="a" style="left:37px;top:31px" width="11" height="16" viewBox="0 0 11 16"><path d="M1.5 1.5h8v10l-4 3.5-4-3.5z" fill="#f8f8f8" stroke="#707070"/></svg>
<div class="a" style="left:34px;top:53px;width:94px;height:30px;background:linear-gradient(#f4f4f4,#dcdcdc);border:1px solid #8a8a8a;border-bottom:none"></div>
<div class="a" style="left:56px;top:53px;width:1px;height:30px;background:#8a8a8a"></div>
<div class="a" style="left:80px;top:53px;width:1px;height:30px;background:#8a8a8a"></div>
<div class="a" style="left:104px;top:53px;width:1px;height:30px;background:#8a8a8a"></div>
<div class="a" style="left:7px;top:51px;width:28px;height:33px;background:#fff;border:1px solid #8a8a8a;border-bottom:none"></div>
<div class="a" style="left:7px;top:83px;width:124px;height:306px;border:1px solid #8a8a8a;border-top:none;background:#f0f0f0"></div>
<div class="a" style="left:8px;top:83px;width:26px;height:2px;background:#fff"></div>
<svg class="a" style="left:12px;top:57px" width="20" height="20" viewBox="0 0 20 20"><rect x=".5" y=".5" width="19" height="19" fill="#e8e8e8" stroke="#666"/><rect x="3" y="3" width="4" height="4" fill="#20b020"/><rect x="8" y="3" width="4" height="4" fill="#1a40e0"/><rect x="13" y="3" width="4" height="4" fill="#2a2a98"/><rect x="3" y="8" width="4" height="4" fill="#802020"/><rect x="8" y="8" width="4" height="4" fill="#e01010"/><rect x="13" y="8" width="4" height="4" fill="#f04010"/><rect x="3" y="13" width="4" height="4" fill="#f8c010"/><rect x="8" y="13" width="4" height="4" fill="#888"/><rect x="13" y="13" width="4" height="4" fill="#444"/></svg>
<svg class="a" style="left:36px;top:57px" width="22" height="22" viewBox="0 0 22 22"><path d="M1 8l5 3.5-5 3.5z" fill="#b0b0b0"/><rect x="10" y="2" width="10" height="5" fill="#3a88e8"/><rect x="9" y="9" width="10" height="5" fill="#f8a020"/><rect x="10" y="16" width="10" height="5" fill="#d81818"/></svg>
<svg class="a" style="left:59px;top:56px" width="20" height="22" viewBox="0 0 20 22"><path d="M10 1l9 5v10l-9 5-9-5V6z" fill="#8a7ae0"/><path d="M10 11l9-5v10l-9 5z" fill="#9a30e0"/><path d="M10 11L1 6v10l9 5z" fill="#d02020"/><path d="M10 7l5 3v6l-5 3-5-3v-6z" fill="#f8c010"/><path d="M10 16v5l-5-3v-5z" fill="#208a20"/></svg>
<svg class="a" style="left:83px;top:56px" width="21" height="22" viewBox="0 0 21 22"><rect x="1" y="2" width="14" height="12" fill="#fff" stroke="#6a8ad8"/><rect x="1" y="2" width="14" height="3" fill="#2a6ae8"/><rect x="6" y="8" width="14" height="12" fill="#f4f4f4" stroke="#6a8ad8"/><rect x="6" y="8" width="14" height="3" fill="#2a6ae8"/></svg>
<svg class="a" style="left:107px;top:56px" width="21" height="22" viewBox="0 0 21 22"><rect x="1" y="2" width="14" height="12" fill="#fff" stroke="#6a8ad8"/><rect x="1" y="2" width="14" height="3" fill="#2a6ae8"/><rect x="6" y="8" width="14" height="12" fill="#f4f4f4" stroke="#6a8ad8"/><rect x="6" y="8" width="14" height="3" fill="#2a6ae8"/></svg>
<div class="fld" style="top:88px">675.0</div>
<div class="fld" style="top:107px">622.5</div>
<div class="fld" style="top:126px">570.0</div>
<div class="fld" style="top:145px">517.4</div>
<div class="fld" style="top:164px">464.9</div>
<div class="fld" style="top:183px">412.4</div>
<div class="a" style="left:116px;top:93px;width:4px;height:105px;border:1px solid #a8a8a8;border-right-color:#fff;background:#e4e4e4"></div>
<svg class="a" style="left:107px;top:88px" width="18" height="11" viewBox="0 0 18 11"><path d="M16.5 1.5h-11l-4 4 4 4h11z" fill="#f6f6f6" stroke="#707070"/></svg>
<svg class="a" style="left:107px;top:192px" width="18" height="11" viewBox="0 0 18 11"><path d="M16.5 1.5h-11l-4 4 4 4h11z" fill="#f6f6f6" stroke="#707070"/></svg>
<div class="a" style="left:100px;top:94px;width:4px;height:1px;background:#a0a0a0;box-shadow:0 10px 0 #a0a0a0,0 20px 0 #a0a0a0,0 31px 0 #a0a0a0,0 41px 0 #a0a0a0,0 51px 0 #a0a0a0,0 61px 0 #a0a0a0,0 71px 0 #a0a0a0,0 82px 0 #a0a0a0,0 92px 0 #a0a0a0,0 102px 0 #a0a0a0"></div>
<div class="a" style="left:12px;top:204px;width:81px;height:22px;border:1px solid #3ca0e0;border-radius:3px;background:linear-gradient(#f4f4f4,#e8e8e8 50%,#d8d8d8 50%,#c8c8c8);box-shadow:inset 0 0 0 1px #a0d8f8;text-align:center;font-size:11px;padding-top:4px">Reset</div>
<div class="a" style="left:108px;top:209px;width:13px;height:13px;border:1px solid #8a8a8a;background:linear-gradient(135deg,#dcdcdc,#f8f8f8)"></div>
<div class="lg" style="top:232px"><b style="background:#ff99ff;height:17px"></b><i style="height:18px">&gt; 675.0</i></div>
<div class="lg" style="top:249px"><b style="background:#e000e0"></b><i>675.0</i></div>
<div class="lg" style="top:265px"><b style="background:#ff0000"></b><i>622.5</i></div>
<div class="lg" style="top:281px"><b style="background:#ffff00"></b><i>570.0</i></div>
<div class="lg" style="top:297px"><b style="background:#00ff00"></b><i>517.4</i></div>
<div class="lg" style="top:313px"><b style="background:#00ffff"></b><i>464.9</i></div>
<div class="lg" style="top:329px"><b style="background:#000080"></b><i>412.4</i></div>
<div class="lg" style="top:345px"><b style="background:#000033"></b><i>&lt; 412.4</i></div>
<span class="a" style="left:115px;top:366px;font-size:8px;color:#222">m</span>
</div>
<div id="status">
<div class="a" style="left:0;top:0;width:1600px;height:1px;background:#d8d8d8"></div>
<div class="a" style="left:1px;top:3px;width:19px;height:19px;background:linear-gradient(#f8f8f8,#e4e4e4);border:1px solid #fff;border-right-color:#808080;border-bottom-color:#808080"></div>
<div class="a" style="left:21px;top:3px;width:19px;height:19px;background:#a8a8a8;border:1px solid #606060;border-right-color:#fff;border-bottom-color:#fff"></div>
<div class="a" style="left:41px;top:3px;width:19px;height:19px;background:linear-gradient(#f8f8f8,#e4e4e4);border:1px solid #fff;border-right-color:#808080;border-bottom-color:#808080"></div>
<div class="a" style="left:61px;top:3px;width:19px;height:19px;background:linear-gradient(#f8f8f8,#e4e4e4);border:1px solid #fff;border-right-color:#808080;border-bottom-color:#808080"></div>
<div class="a" style="left:81px;top:3px;width:19px;height:19px;background:linear-gradient(#f8f8f8,#e4e4e4);border:1px solid #fff;border-right-color:#808080;border-bottom-color:#808080"></div>
<svg class="a" style="left:2px;top:4px" width="98" height="17" viewBox="0 0 98 17">
<g fill="#e8f2fc" stroke="#1a6ad8" stroke-width="1.2"><circle cx="8.5" cy="8.5" r="6.5"/><circle cx="28.5" cy="8.5" r="6.5"/><circle cx="48.5" cy="8.5" r="6.5"/><circle cx="68.5" cy="8.5" r="6.5"/><circle cx="88.5" cy="8.5" r="6.5"/></g>
<g fill="#1a6ad8"><path d="M6.5 5.5l5 3-5 3z"/><path d="M25 5.5l3.5 3-3.5 3zM29 5.5l3.5 3-3.5 3z"/><rect x="45.5" y="5" width="2" height="7"/><rect x="49.5" y="5" width="2" height="7"/><path d="M65 5.5l3.5 3-3.5 3zM69 5.5l3.5 3-3.5 3z"/><path d="M86.5 5.5l5 3-5 3z"/></g>
</svg>
<div class="sb" style="left:101px;width:215px;background:#fff;font-weight:bold;padding-left:2px"><span class="a" style="left:2px;top:2px;font-size:12px;letter-spacing:-0.3px">Coords 17958.6 E</span><span class="a" style="left:109px;top:2px;font-size:12px;letter-spacing:0.3px">3666.4 N</span><span class="a" style="left:168px;top:2px;font-size:12px;letter-spacing:0.3px">506 Z</span></div>
<div class="sb" style="left:318px;width:124px;background:#90ee90;border-left:2px solid #606060;font-size:11.8px;padding-left:4px">Simulation successful</div>
<div class="sb" style="left:444px;width:36px;font-weight:bold">Type</div>
<div class="sb" style="left:481px;width:152px">Pipes 488&nbsp;&nbsp;Sim Iterations 59</div>
</div>
</body></html>
